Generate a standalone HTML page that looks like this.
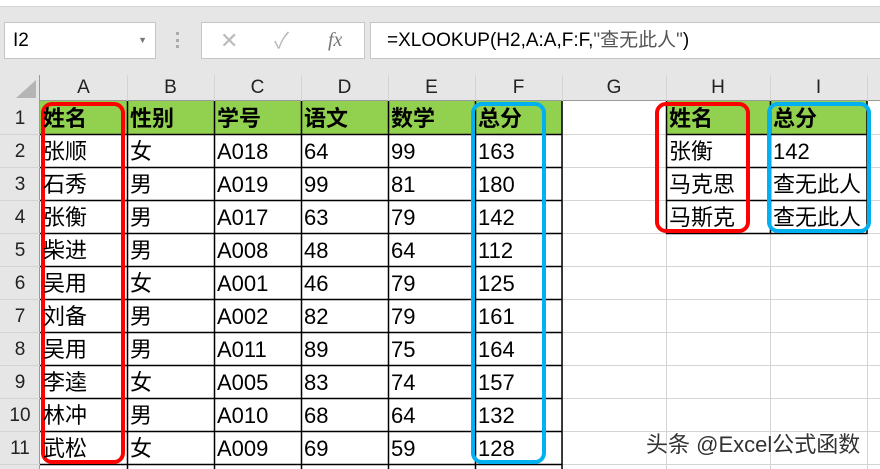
<!DOCTYPE html><html><head><meta charset="utf-8"><style>
*{margin:0;padding:0;box-sizing:border-box}
body{width:880px;height:469px;overflow:hidden;background:#e6e6e6;font-family:"Liberation Sans","Noto Sans CJK SC",sans-serif;position:relative}
.a{position:absolute}
.cell{position:absolute;font-size:22px;line-height:35px;padding-left:3px;color:#000;white-space:nowrap}
.hd{position:absolute;font-size:19px;color:#222;text-align:center;line-height:26px;top:75px}
.rn{position:absolute;left:0;width:40px;text-align:center;font-size:19px;color:#222;line-height:35px}
.b{font-weight:bold}
</style></head><body>
<div class="a" style="left:0;top:0;width:880px;height:7px;background:#fff;border-bottom:1px solid #d4d4d4"></div>
<div class="a" style="left:4px;top:22px;width:152px;height:37px;background:#fff;border:1px solid #c6c6c6;font-size:19px;line-height:35px;padding-left:8px">I2<span style="position:absolute;right:8px;top:0;font-size:9px;color:#777">▼</span></div>
<div class="a" style="left:176px;top:32px;width:3px;height:16px;border-left:3px dotted #aaa"></div>
<div class="a" style="left:201px;top:22px;width:164px;height:37px;background:#fff;border:1px solid #c6c6c6;color:#bbb;font-size:22px;line-height:35px"><span style="position:absolute;left:18px">✕</span><span style="position:absolute;left:72px">✓</span><span style="position:absolute;left:126px;color:#777;font-family:'Liberation Serif',serif;font-style:italic;font-size:20px">fx</span></div>
<div class="a" style="left:370px;top:22px;width:520px;height:37px;background:#fff;border:1px solid #c6c6c6;font-size:19px;line-height:35px;padding-left:16px">=XLOOKUP(H2,A:A,F:F,<span style="color:#555">"查无此人"</span>)</div>
<div class="a" style="left:0;top:75px;width:880px;height:394px;background:#fff"></div>
<div class="a" style="left:0;top:75px;width:880px;height:26px;background:#e6e6e6;border-bottom:1px solid #9a9a9a"></div>
<div class="a" style="left:0;top:75px;width:40px;height:394px;background:#e6e6e6;border-right:1px solid #9a9a9a"></div>
<svg class="a" style="left:14px;top:79px" width="24" height="20"><polygon points="22,1 22,19 2,19" fill="#b5b5b5"/></svg>
<svg class="a" style="left:0;top:0" width="880" height="469">
<g stroke="#d4d4d4" stroke-width="1">
<line x1="562.5" y1="101" x2="562.5" y2="469"/><line x1="666.5" y1="101" x2="666.5" y2="469"/><line x1="770.5" y1="101" x2="770.5" y2="469"/><line x1="867.5" y1="101" x2="867.5" y2="469"/>
<line x1="562" y1="134.5" x2="880" y2="134.5"/><line x1="562" y1="167.5" x2="880" y2="167.5"/><line x1="562" y1="200.5" x2="880" y2="200.5"/><line x1="562" y1="233.5" x2="880" y2="233.5"/><line x1="562" y1="266.5" x2="880" y2="266.5"/><line x1="562" y1="299.5" x2="880" y2="299.5"/><line x1="562" y1="332.5" x2="880" y2="332.5"/><line x1="562" y1="365.5" x2="880" y2="365.5"/><line x1="562" y1="398.5" x2="880" y2="398.5"/><line x1="562" y1="431.5" x2="880" y2="431.5"/><line x1="562" y1="464.5" x2="880" y2="464.5"/>
<line x1="0" y1="134.5" x2="40" y2="134.5"/><line x1="0" y1="167.5" x2="40" y2="167.5"/><line x1="0" y1="200.5" x2="40" y2="200.5"/><line x1="0" y1="233.5" x2="40" y2="233.5"/><line x1="0" y1="266.5" x2="40" y2="266.5"/><line x1="0" y1="299.5" x2="40" y2="299.5"/><line x1="0" y1="332.5" x2="40" y2="332.5"/><line x1="0" y1="365.5" x2="40" y2="365.5"/><line x1="0" y1="398.5" x2="40" y2="398.5"/><line x1="0" y1="431.5" x2="40" y2="431.5"/><line x1="0" y1="464.5" x2="40" y2="464.5"/>
<line x1="127.5" y1="75" x2="127.5" y2="101"/><line x1="214.5" y1="75" x2="214.5" y2="101"/><line x1="301.5" y1="75" x2="301.5" y2="101"/><line x1="388.5" y1="75" x2="388.5" y2="101"/><line x1="475.5" y1="75" x2="475.5" y2="101"/><line x1="562.5" y1="75" x2="562.5" y2="101"/><line x1="666.5" y1="75" x2="666.5" y2="101"/><line x1="770.5" y1="75" x2="770.5" y2="101"/><line x1="867.5" y1="75" x2="867.5" y2="101"/>
</g>
<rect x="40" y="101" width="522" height="33" fill="#92d050"/>
<rect x="666" y="101" width="201" height="33" fill="#92d050"/>
<g stroke="#000" stroke-width="1.5">
<line x1="40" y1="134.5" x2="562" y2="134.5"/><line x1="40" y1="167.5" x2="562" y2="167.5"/><line x1="40" y1="200.5" x2="562" y2="200.5"/><line x1="40" y1="233.5" x2="562" y2="233.5"/><line x1="40" y1="266.5" x2="562" y2="266.5"/><line x1="40" y1="299.5" x2="562" y2="299.5"/><line x1="40" y1="332.5" x2="562" y2="332.5"/><line x1="40" y1="365.5" x2="562" y2="365.5"/><line x1="40" y1="398.5" x2="562" y2="398.5"/><line x1="40" y1="431.5" x2="562" y2="431.5"/><line x1="40" y1="464.5" x2="562" y2="464.5"/>
<line x1="127.5" y1="101" x2="127.5" y2="469"/><line x1="214.5" y1="101" x2="214.5" y2="469"/><line x1="301.5" y1="101" x2="301.5" y2="469"/><line x1="388.5" y1="101" x2="388.5" y2="469"/><line x1="475.5" y1="101" x2="475.5" y2="469"/><line x1="562" y1="101" x2="562" y2="469"/>
<line x1="666" y1="134.5" x2="867" y2="134.5"/><line x1="666" y1="167.5" x2="867" y2="167.5"/><line x1="666" y1="200.5" x2="867" y2="200.5"/><line x1="666" y1="233.5" x2="867" y2="233.5"/>
<line x1="666.5" y1="101" x2="666.5" y2="234"/><line x1="770.5" y1="101" x2="770.5" y2="234"/><line x1="867" y1="101" x2="867" y2="234"/>
</g>
<g fill="none" stroke-width="4">
<rect x="43" y="104" width="80" height="358" rx="9" stroke="#ff0000"/>
<rect x="473" y="104" width="71" height="358" rx="9" stroke="#00b0f0"/>
<rect x="657" y="104" width="91" height="127" rx="9" stroke="#ff0000"/>
<rect x="769" y="104" width="100" height="127" rx="9" stroke="#00b0f0"/>
</g>
</svg>
<div class="hd" style="left:40px;width:87px">A</div><div class="hd" style="left:127px;width:87px">B</div><div class="hd" style="left:214px;width:87px">C</div><div class="hd" style="left:301px;width:87px">D</div><div class="hd" style="left:388px;width:87px">E</div><div class="hd" style="left:475px;width:87px">F</div><div class="hd" style="left:562px;width:104px">G</div><div class="hd" style="left:666px;width:104px">H</div><div class="hd" style="left:770px;width:97px">I</div>
<div class="rn" style="top:101px">1</div><div class="rn" style="top:134px">2</div><div class="rn" style="top:167px">3</div><div class="rn" style="top:200px">4</div><div class="rn" style="top:233px">5</div><div class="rn" style="top:266px">6</div><div class="rn" style="top:299px">7</div><div class="rn" style="top:332px">8</div><div class="rn" style="top:365px">9</div><div class="rn" style="top:398px">10</div><div class="rn" style="top:431px">11</div>
<div id="t"></div>
<script>
var rows=[["姓名","性别","学号","语文","数学","总分"],["张顺","女","A018","64","99","163"],["石秀","男","A019","99","81","180"],["张衡","男","A017","63","79","142"],["柴进","男","A008","48","64","112"],["吴用","女","A001","46","79","125"],["刘备","男","A002","82","79","161"],["吴用","男","A011","89","75","164"],["李逵","女","A005","83","74","157"],["林冲","男","A010","68","64","132"],["武松","女","A009","69","59","128"]];
var xs=[40,127,214,301,388,475],h="";
rows.forEach(function(r,i){r.forEach(function(c,j){h+='<div class="cell'+(i==0?' b':'')+'" style="left:'+xs[j]+'px;top:'+(101+i*33)+'px">'+c+'</div>';});});
var r2=[["姓名","总分"],["张衡","142"],["马克思","查无此人"],["马斯克","查无此人"]];
r2.forEach(function(r,i){h+='<div class="cell'+(i==0?' b':'')+'" style="left:666px;top:'+(101+i*33)+'px">'+r[0]+'</div><div class="cell'+(i==0?' b':'')+'" style="left:770px;top:'+(101+i*33)+'px">'+r[1]+'</div>';});
document.getElementById('t').innerHTML=h;
</script>
<div class="a" style="left:646px;top:432px;font-size:22px;color:#333;line-height:26px;text-shadow:0 0 2px #fff">头条 @Excel公式函数</div>
</body></html>
